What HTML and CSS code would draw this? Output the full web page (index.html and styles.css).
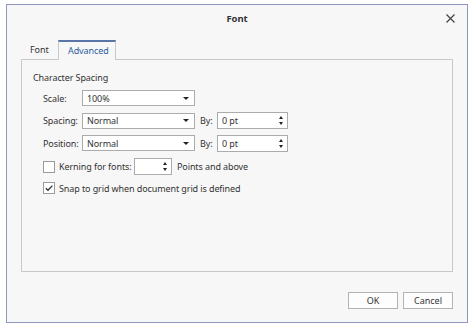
FILE: index.html
```html
<!DOCTYPE html>
<html lang="en">
<head>
    <meta charset="UTF-8">
    <title>Font</title>
    <link rel="stylesheet" href="styles.css">
</head>
<body>
    <div class="dialog">
        <div class="titlebar">
            <span></span>
            <span class="title">Font</span>
            <span class="close">
                <svg width="9" height="9" viewBox="0 0 9 9"><path d="M0.5 0.5L8.5 8.5M8.5 0.5L0.5 8.5" stroke="#444" stroke-width="1.2"/></svg>
            </span>
        </div>

        <div class="tabs">
            <div class="tab">Font</div>
            <div class="tab active">Advanced</div>
        </div>

        <div class="panel">
            <div class="group-title">Character Spacing</div>

            <div class="row first">
                <label class="label">Scale:</label>
                <div class="select"><span>100%</span><i class="caret"></i></div>
            </div>

            <div class="row">
                <label class="label">Spacing:</label>
                <div class="select"><span>Normal</span><i class="caret"></i></div>
                <label class="by">By:</label>
                <div class="spin wide"><span>0 pt</span><i class="arrows"></i></div>
            </div>

            <div class="row">
                <label class="label">Position:</label>
                <div class="select"><span>Normal</span><i class="caret"></i></div>
                <label class="by">By:</label>
                <div class="spin wide"><span>0 pt</span><i class="arrows"></i></div>
            </div>

            <div class="row check-row kerning">
                <span class="checkbox"></span>
                <span class="check-text">Kerning for fonts:</span>
                <div class="spin small"><span></span><i class="arrows"></i></div>
                <span class="after">Points and above</span>
            </div>

            <div class="row check-row snap">
                <span class="checkbox checked">
                    <svg width="10" height="10" viewBox="0 0 10 10"><path d="M1.8 5.2L4 7.3L8.4 2.6" fill="none" stroke="#333" stroke-width="1.3"/></svg>
                </span>
                <span class="check-text">Snap to grid when document grid is defined</span>
            </div>
        </div>

        <div class="footer">
            <button class="btn">OK</button>
            <button class="btn">Cancel</button>
        </div>
    </div>
</body>
</html>
```

FILE: styles.css
```css
* {
    margin: 0;
    padding: 0;
    box-sizing: border-box;
    font-family: 'Noto Sans', 'Open Sans', sans-serif;
}

body {
    background-color: #fff;
    width: 474px;
    height: 331px;
    padding: 4px 0 0 6px;
    color: #3c3c3c;
    font-size: 9px;
    letter-spacing: -0.1px;
}

.dialog {
    width: 462px;
    height: 319px;
    border: 1px solid #8e98bd;
    background-color: #f7f7f7;
    display: flex;
    flex-direction: column;
}

.titlebar {
    height: 26px;
    display: grid;
    grid-template-columns: 1fr auto 1fr;
    align-items: center;
}

.title {
    font-size: 9.5px;
    font-weight: 700;
    color: #333;
    padding-top: 1px;
}

.close {
    justify-self: end;
    margin-right: 12px;
    display: flex;
    padding-top: 1px;
}

/* Tabs */
.tabs {
    display: flex;
    margin-top: 9px;
    padding-left: 14px;
    height: 19px;
}

.tab {
    width: 37px;
    padding-left: 9px;
    line-height: 20px;
    color: #333;
}

.tab.active {
    width: 58px;
    padding-left: 9px;
    color: #2d5d9f;
    background-color: #f7f7f7;
    border: 1px solid #c9c9c9;
    border-top: 2px solid #5a76a8;
    border-bottom: none;
    line-height: 17px;
    position: relative;
    z-index: 1;
    height: 20px;
}

/* Panel */
.panel {
    margin: 0 14px;
    height: 213px;
    border: 1px solid #c9c9c9;
    padding: 11px 0 0 11px;
}

.group-title {
    line-height: 14px;
    color: #333;
}

.row {
    display: flex;
    align-items: center;
    height: 16px;
    margin-top: 6.5px;
    margin-left: 10px;
}

.row.first {
    margin-top: 5px;
}

.label {
    width: 39px;
    flex-shrink: 0;
    color: #333;
}

.select {
    width: 113px;
    height: 16px;
    background-color: #fff;
    border: 1px solid #ababab;
    display: flex;
    align-items: center;
    justify-content: space-between;
    padding: 0 4px 0 4px;
    color: #333;
}

.caret {
    width: 0;
    height: 0;
    border-left: 3px solid transparent;
    border-right: 3px solid transparent;
    border-top: 3px solid #222;
    margin-right: 1px;
}

.by {
    margin-left: 5px;
    width: 17px;
    color: #333;
}

.spin {
    height: 17px;
    background-color: #fff;
    border: 1px solid #ababab;
    display: flex;
    align-items: center;
    justify-content: space-between;
    padding: 0 3px 0 4px;
    color: #333;
}

.spin.wide {
    width: 71px;
}

.spin.small {
    width: 38px;
}

.arrows {
    width: 5px;
    height: 9px;
    position: relative;
}

.arrows::before,
.arrows::after {
    content: "";
    position: absolute;
    left: 0;
    border-left: 2.5px solid transparent;
    border-right: 2.5px solid transparent;
}

.arrows::before {
    top: 0;
    border-bottom: 3px solid #222;
}

.arrows::after {
    bottom: 0;
    border-top: 3px solid #222;
}

/* Checkbox rows */
.check-row.kerning {
    height: 17px;
    margin-top: 7px;
}

.check-row.snap {
    margin-top: 5px;
}

.checkbox {
    width: 12px;
    height: 12px;
    border: 1px solid #9a9a9a;
    background-color: #fff;
    display: flex;
    align-items: center;
    justify-content: center;
}

.check-text {
    margin-left: 4px;
    color: #333;
}

.kerning .check-text {
    width: 75px;
}

.after {
    margin-left: 5px;
    color: #333;
}

/* Footer */
.footer {
    display: flex;
    justify-content: flex-end;
    gap: 5px;
    margin: 20px 14px 0 0;
}

.btn {
    width: 50px;
    height: 17px;
    border: 1px solid #b3b3b3;
    background-color: #fdfdfd;
    font-size: 9px;
    color: #333;
}
```
